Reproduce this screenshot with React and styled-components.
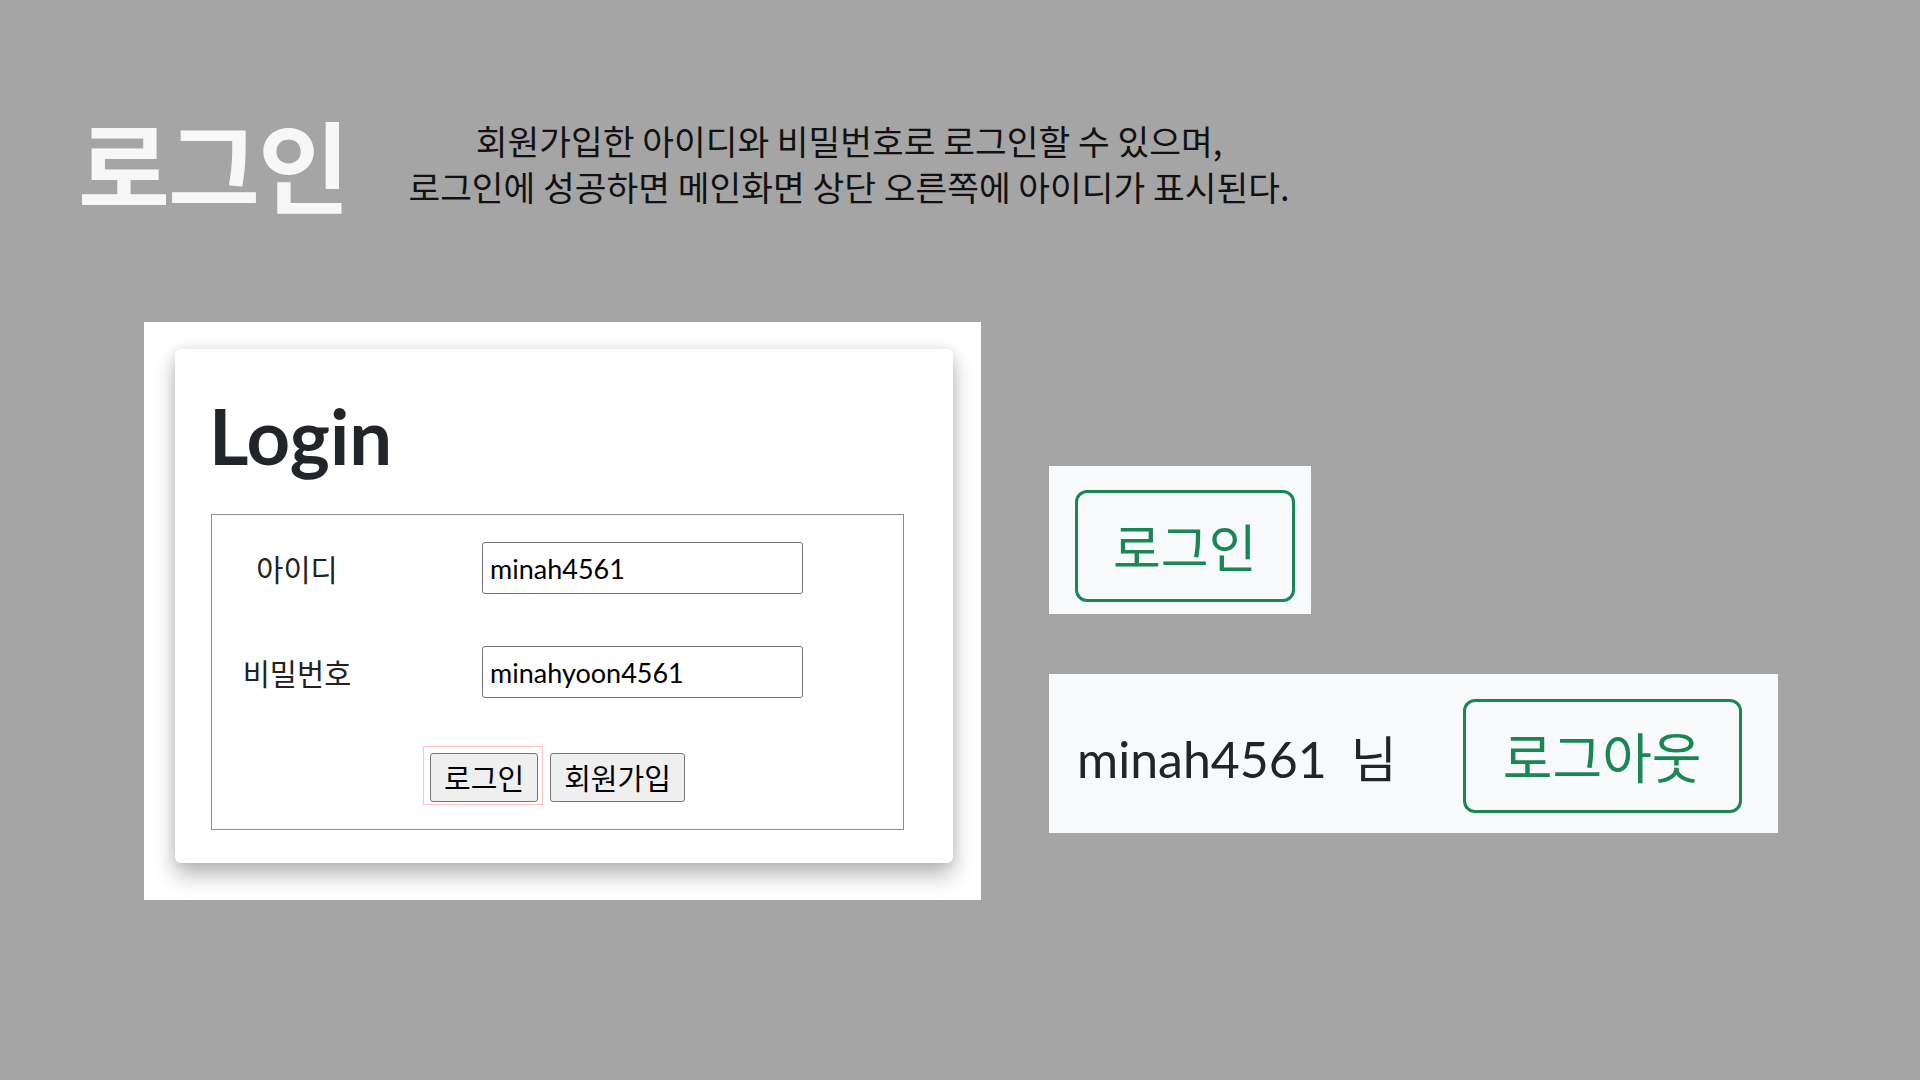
import React from "react";
import styled, { createGlobalStyle } from "styled-components";

const GlobalStyle = createGlobalStyle`
  * {
    box-sizing: border-box;
  }
  body {
    margin: 0;
    background-color: #a5a5a5;
    font-family: Lato, "Noto Sans CJK KR", sans-serif;
  }
`;

function LoginForm() {
  return (
    <Card>
      <Heading>Login</Heading>
      <FormBox>
        <FieldRow>
          <Label>아이디</Label>
          <Input defaultValue="minah4561" />
        </FieldRow>
        <FieldRow>
          <Label>비밀번호</Label>
          <Input defaultValue="minahyoon4561" />
        </FieldRow>
        <ButtonRow>
          <PlainButton $focused>로그인</PlainButton>
          <PlainButton>회원가입</PlainButton>
        </ButtonRow>
      </FormBox>
    </Card>
  );
}

export default function App() {
  return (
    <Page>
      <GlobalStyle />
      <Header>
        <Title>로그인</Title>
        <Description>
          회원가입한 아이디와 비밀번호로 로그인할 수 있으며,
          <br />
          로그인에 성공하면 메인화면 상단 오른쪽에 아이디가 표시된다.
        </Description>
      </Header>

      <Content>
        <ShotPanel>
          <LoginForm />
        </ShotPanel>

        <RightColumn>
          <NavShot $pad="24px 16px 12px 26px">
            <OutlineButton $size={52} $padX={35}>
              로그인
            </OutlineButton>
          </NavShot>
          <NavShot $pad="25px 36px 20px 28px">
            <UserName>
              minah4561<Nim>님</Nim>
            </UserName>
            <OutlineButton $size={54} $padX={37}>
              로그아웃
            </OutlineButton>
          </NavShot>
        </RightColumn>
      </Content>
    </Page>
  );
}

const Page = styled.div`
  width: 1920px;
  min-height: 1080px;
  padding-top: 113px;
`;

const Header = styled.header`
  display: flex;
  align-items: center;
  padding-left: 78px;
`;

const Title = styled.h1`
  margin: 0;
  font-family: "Noto Sans CJK KR", sans-serif;
  font-size: 100px;
  font-weight: 700;
  letter-spacing: -2px;
  line-height: 1;
  color: #f7f7f7;
`;

const Description = styled.p`
  margin: 0 0 0 51px;
  width: 900px;
  text-align: center;
  font-family: "Noto Sans CJK KR", sans-serif;
  font-size: 34.5px;
  line-height: 46px;
  color: #111;
`;

const Content = styled.main`
  display: flex;
  align-items: flex-start;
  gap: 68px;
  margin: 109px 0 0 144px;
`;

const ShotPanel = styled.section`
  background-color: #ffffff;
  padding: 27px 28px 37px 31px;
`;

const Card = styled.div`
  width: 778px;
  height: 514px;
  padding: 41px 0 0 36px;
  background-color: #fff;
  border-radius: 6px;
  box-shadow: 0 12px 22px rgba(0, 0, 0, 0.28), 0 0 12px rgba(0, 0, 0, 0.1);
`;

const Heading = styled.h2`
  margin: 0 0 33px -2px;
  font-size: 76px;
  font-weight: 700;
  line-height: 1.2;
  color: #212529;
`;

const FormBox = styled.div`
  width: 693px;
  padding: 27px 0;
  border: 1px solid #8c8c8c;
  display: flex;
  flex-direction: column;
  gap: 52px;
`;

const FieldRow = styled.div`
  display: grid;
  grid-template-columns: 170px 321px;
  column-gap: 100px;
  align-items: center;
`;

const Label = styled.span`
  text-align: center;
  font-family: "Noto Sans CJK KR", sans-serif;
  font-size: 29.5px;
  color: #222;
`;

const Input = styled.input`
  width: 321px;
  height: 52px;
  padding: 0 7px;
  border: 1px solid #767676;
  border-radius: 3px;
  background: #fff;
  font-family: Lato, sans-serif;
  font-size: 27px;
  color: #000;
  outline: none;
`;

const ButtonRow = styled.div`
  display: flex;
  justify-content: center;
  gap: 12px;
  margin-top: 3px;
`;

const PlainButton = styled.button`
  position: relative;
  height: 49px;
  padding: 0 13px;
  border: 1px solid #767676;
  border-radius: 3px;
  background-color: #efefef;
  font-family: "Noto Sans CJK KR", sans-serif;
  font-size: 29px;
  line-height: 1;
  color: #000;

  &::after {
    content: "";
    display: ${(p) => (p.$focused ? "block" : "none")};
    position: absolute;
    inset: -8px -6px -4px -8px;
    border: 1px solid #ffc2c2;
  }
`;

const RightColumn = styled.div`
  display: flex;
  flex-direction: column;
  align-items: flex-start;
  gap: 60px;
  margin-top: 144px;
`;

const NavShot = styled.div`
  display: flex;
  align-items: center;
  background-color: #f8f9fa;
  padding: ${(p) => p.$pad};
`;

const OutlineButton = styled.button`
  padding: 19px ${(p) => p.$padX}px;
  border: 3px solid #198754;
  border-radius: 12px;
  background: transparent;
  font-family: "Noto Sans CJK KR", sans-serif;
  font-size: ${(p) => p.$size}px;
  line-height: 1.3;
  color: #198754;
`;

const UserName = styled.span`
  font-size: 50px;
  color: #212529;
  margin-right: 66px;
`;

const Nim = styled.span`
  margin-left: 24px;
  font-family: "Noto Sans CJK KR", sans-serif;
`;
